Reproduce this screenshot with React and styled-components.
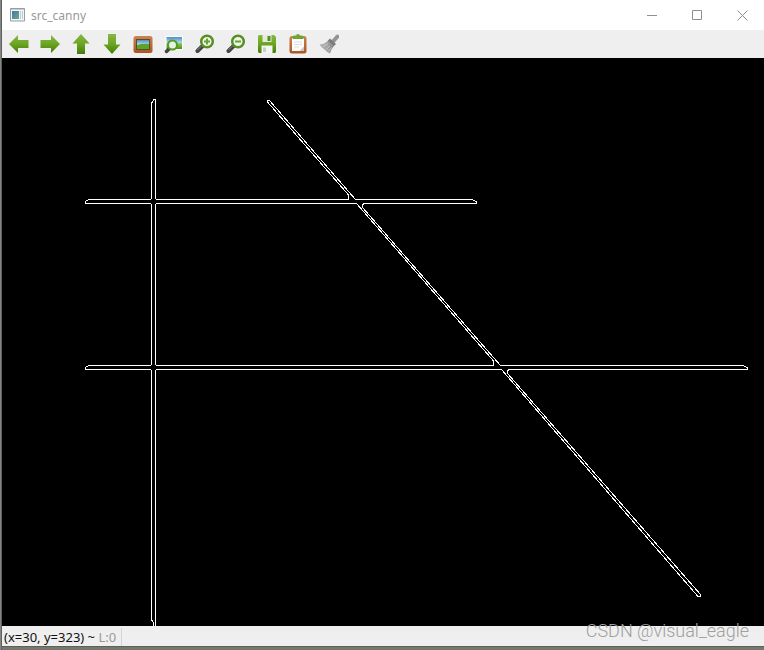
import React from 'react'
import styled, { createGlobalStyle } from 'styled-components'

const App = () => {
  return (
    <>
      <GlobalStyle />
      <Desktop>
        <Window>
          <TitleBar>
            <AppIcon />
            <Title>src_canny</Title>
            <WindowButton aria-label="Minimize">
              <path d="M0 5.5h10" />
            </WindowButton>
            <WindowButton aria-label="Maximize">
              <path d="M0.5 0.5h9v9h-9z" />
            </WindowButton>
            <WindowButton aria-label="Close">
              <path d="M0.5 0.5l10 10M10.5 0.5l-10 10" />
            </WindowButton>
          </TitleBar>
          <Toolbar>
            {tools.map(({ label, art }) => (
              <ToolButton key={label} type="button" aria-label={label}>
                <svg viewBox="0 0 20 20" width="20" height="20">{art}</svg>
              </ToolButton>
            ))}
          </Toolbar>
          <EdgeImage />
          <StatusBar>
            <Position>(x=30, y=323) ~ <Level>L:0</Level></Position>
          </StatusBar>
        </Window>
        <Watermark>CSDN @visual_eagle</Watermark>
      </Desktop>
    </>
  )
}

export default App

const AppIcon = () => (
  <svg width="15" height="14" viewBox="0 0 15 14" aria-hidden="true">
    <defs>
      <linearGradient id="screen" x1="0" y1="0" x2="1" y2="1">
        <stop offset="0" stopColor="#4d74a8" />
        <stop offset="1" stopColor="#5fae86" />
      </linearGradient>
    </defs>
    <path d="M0.5 0.5h14v12.5h-14z" fill="#f4f5f6" stroke="#929da5" />
    <path d="M1 1h13v1H1z" fill="#c6ced4" />
    <path d="M2 3h7v8H2z" fill="url(#screen)" />
    <path d="M10 3h1v8h-1zM12 3h1v8h-1z" fill="#c3c9ce" />
  </svg>
)

const WindowButton = ({ children, ...rest }) => (
  <CaptionButton type="button" {...rest}>
    <svg width="11" height="11" viewBox="0 0 11 11" fill="none" stroke="#8f8f8f">
      {children}
    </svg>
  </CaptionButton>
)

const Gradients = () => (
  <defs>
    <linearGradient id="leaf" x1="0" y1="0" x2="0" y2="1">
      <stop offset="0" stopColor="#86b846" />
      <stop offset="0.5" stopColor="#6ca522" />
      <stop offset="1" stopColor="#487a0c" />
    </linearGradient>
    <linearGradient id="wood" x1="0" y1="0" x2="0" y2="1">
      <stop offset="0" stopColor="#cb8450" />
      <stop offset="1" stopColor="#ab5426" />
    </linearGradient>
    <linearGradient id="sky" x1="0" y1="0" x2="0" y2="1">
      <stop offset="0" stopColor="#4d90c8" />
      <stop offset="0.5" stopColor="#b5dcec" />
      <stop offset="0.55" stopColor="#8bc34a" />
      <stop offset="1" stopColor="#4b921c" />
    </linearGradient>
    <linearGradient id="steel" x1="0" y1="0" x2="1" y2="0">
      <stop offset="0" stopColor="#b4b4b4" />
      <stop offset="0.6" stopColor="#a2a2a2" />
      <stop offset="1" stopColor="#808080" />
    </linearGradient>
  </defs>
)

const Lens = ({ sign }) => (
  <>
    <path d="M2.5 17l5-5" stroke="#444" strokeWidth="4" strokeLinecap="round" />
    <path d="M2.5 16l4-4" stroke="#858585" strokeWidth="1" />
    <circle cx="12" cy="7.500" r="5.800" fill="#eff6e8" stroke="#578f25" strokeWidth="2.500" />
    <path d={sign} stroke="#6b9f3a" strokeWidth="2" />
  </>
)

const tools = [
  {
    label: 'Panning left',
    art: (
      <>
        <Gradients />
        <path d="M0 10L9 1V6h10.500v8H9v5z" fill="url(#leaf)" />
      </>
    )
  },
  { label: 'Panning right', art: <path d="M20 10L11 1V6H0.500v8H11v5z" fill="url(#leaf)" /> },
  { label: 'Panning up', art: <path d="M10 0l8.500 9.500H14V20H6V9.500H1.500z" fill="url(#leaf)" /> },
  { label: 'Panning down', art: <path d="M10 20l8.500-9.500H14V0H6v10.500H1.500z" fill="url(#leaf)" /> },
  {
    label: 'Zoom x1',
    art: (
      <>
        <rect x="0.500" y="2" width="19" height="17" rx="2.500" fill="url(#wood)" />
        <path d="M3 5h14v11H3z" fill="#5b4c22" />
        <path d="M4 6h12v9H4z" fill="url(#sky)" />
        <path d="M4 11q6-2 12-1v5H4z" fill="#5ba32a" />
      </>
    )
  },
  {
    label: 'Zoom x30',
    art: (
      <>
        <path d="M1.500 2h17.500v14H1.500z" fill="#fff" />
        <path d="M2.500 3h15.500v12H2.500z" fill="url(#sky)" />
        <path d="M2.500 17.500l3-3" stroke="#444" strokeWidth="3.500" strokeLinecap="round" />
        <circle cx="8.500" cy="11" r="4.500" fill="#e5f1e3" stroke="#589921" strokeWidth="2" />
      </>
    )
  },
  { label: 'Zoom in', art: <Lens sign="M9 7.500h6M12 4.500v6" /> },
  { label: 'Zoom out', art: <Lens sign="M9 7.500h6" /> },
  {
    label: 'Save image',
    art: (
      <>
        <path d="M2 1h15l2 2v15l-1 1H2l-1-1V2z" fill="url(#leaf)" />
        <path d="M5.500 1h9v7h-9z" fill="#e4eddb" />
        <path d="M10.500 2h3v5h-3z" fill="#568d22" />
        <path d="M4.500 11.500h11V19h-11z" fill="#f5f5f5" />
        <path d="M6 13.500h3V18H6z" fill="#c9cfc4" />
      </>
    )
  },
  {
    label: 'Copy to clipboard',
    art: (
      <>
        <rect x="1.500" y="2" width="17" height="17.500" rx="2.500" fill="url(#wood)" />
        <path d="M4 4h12v13H4z" fill="#fdfdfd" />
        <path d="M16 12.500V17h-4.500z" fill="#c9c4be" />
        <path d="M4.500 5V3q0-1.500 2-1.500h1.500Q8.500 0 10 0t2 1.500h1.500q2 0 2 1.500v2z" fill="#6fa530" />
        <path d="M6 8h8M6 10.500h8M6 13h5" stroke="#dedede" />
      </>
    )
  },
  {
    label: 'Display properties',
    art: (
      <>
        <path d="M18.500 2.500L14 7.500" stroke="#949494" strokeWidth="4" strokeLinecap="round" />
        <path d="M11 4.500l6 5.500-2.500 2.500-6-5.500z" fill="#7c7c7c" />
        <path d="M8.500 7l6 5.500q-2.500 3-3.500 7-3-1-5.500-4Q2 13.500 0.500 10.500 6 10 8.500 7z" fill="url(#steel)" />
        <path d="M4 12.500l5-2.500M7 15.500l4-3.500M9.500 17.500l3-4" stroke="#cfcfcf" strokeWidth="0.800" />
      </>
    )
  }
]

const EdgeImage = () => (
  <Canvas viewBox="2 58 762 568" role="img" aria-label="Edges">
    {/* vertical bar */}
    <path d="M151.500 199V103.500L152.500 101.500L154 99.500H155.500V199" />
    <path d="M151.500 204V365M155.500 204V365" />
    <path d="M151.500 370V619.500L153.500 623V626M155.500 370V626" />
    {/* upper bar */}
    <path d="M151 199.500H89L87 200.500L85.500 201.500V203.500H151" />
    <path d="M156 199.500H348.500V195M156 203.500H357" />
    <path d="M355 199.500H472L474 200.500L476.500 201.500V203.500H364L362.500 205V207.500" />
    {/* lower bar */}
    <path d="M151 365.500H89L87 366.500L85.500 367.500V369.500H151" />
    <path d="M156 365.500H493.500V361M156 369.500H502" />
    <path d="M500 365.500H743L745 366.500L747.500 367.500V369.500H509L507.500 371V373.500" />
    {/* diagonal bar */}
    <path d="M348.500 195L267.500 102V100.500H269.500L355.500 199.500" />
    <path d="M356.500 203.500L493.500 361M362.500 207.500L500.500 365.500" />
    <path d="M501.500 369.500L698 596.500H700.500V594.500L507.500 373.500" />
  </Canvas>
)

const GlobalStyle = createGlobalStyle`
  * {
    box-sizing: border-box;
  }

  body {
    margin: 0;
    background: #77776c;
    font-family: 'Noto Sans', 'Open Sans', sans-serif;
    font-size: 12px;
  }
`

const Desktop = styled.div`
  position: relative;
  min-height: 100vh;
  padding: 0 0 4px 2px;
  background: linear-gradient(90deg, #858585 1px, #606060 1px, #606060 2px, #77776c 2px);
`

const Window = styled.main`
  display: flex;
  flex-direction: column;
  background: #efefef;
  box-shadow: 0 1px 0 #5e5e5e;
`

const TitleBar = styled.header`
  display: flex;
  align-items: center;
  height: 30px;
  padding-left: 8px;
  background: #fff;
`

const Title = styled.span`
  flex: 1;
  margin-left: 6px;
  color: #999;
`

const CaptionButton = styled.button`
  display: flex;
  align-items: center;
  justify-content: flex-end;
  width: 45px;
  height: 30px;
  padding: 0 16px 0 0;
  border: 0;
  background: none;

  &:hover {
    background: #e5e5e5;
  }
`

const Toolbar = styled.nav`
  display: flex;
  align-items: center;
  gap: 11px;
  height: 28px;
  padding-left: 7px;
`

const ToolButton = styled.button`
  display: flex;
  padding: 0;
  border: 0;
  background: none;

  svg {
    fill: none;
  }
`

const Canvas = styled.svg`
  display: block;
  width: 100%;
  background: #000;
  fill: none;
  stroke: #fff;
  shape-rendering: crispEdges;
`

const StatusBar = styled.footer`
  display: flex;
  align-items: center;
  height: 20px;
  padding: 2px 0 0 2px;
  font-size: 13px;
`

const Position = styled.span`
  padding-right: 5px;
  border-right: 1px solid #d4d4d4;
  color: #111;
`

const Level = styled.span`
  color: #999;
`

const Watermark = styled.div`
  position: absolute;
  right: 15px;
  bottom: 7px;
  color: #a0a0a0;
  font-family: Roboto, 'Liberation Sans', sans-serif;
  font-size: 18px;
  font-weight: 300;
  line-height: 24px;
`
